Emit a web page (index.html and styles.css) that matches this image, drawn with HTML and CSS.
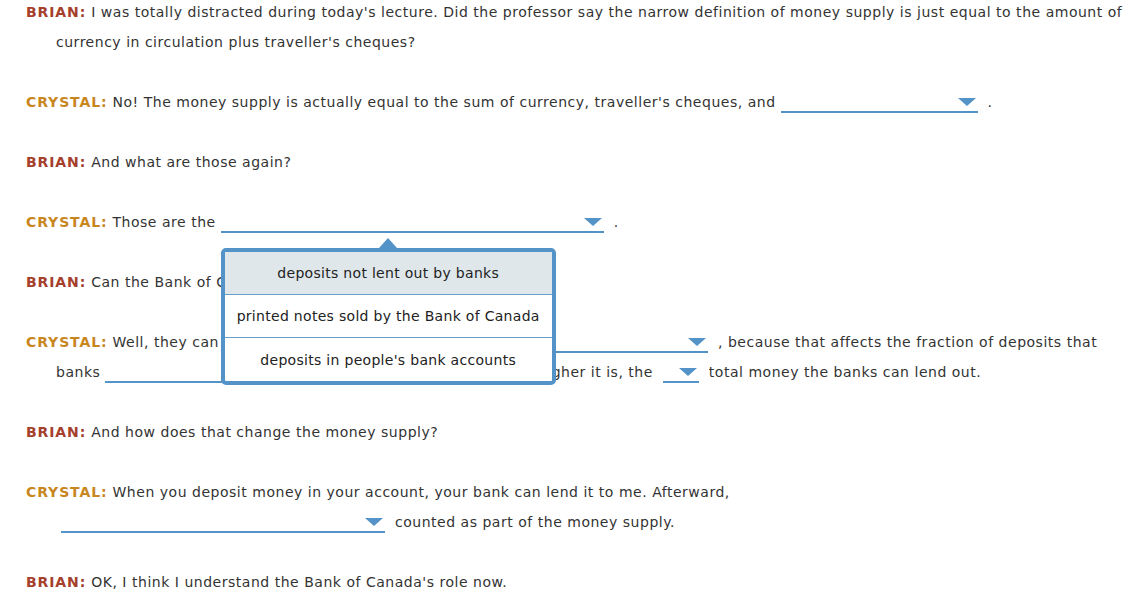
FILE: index.html
```html
<!DOCTYPE html>
<html>
<head>
<meta charset="utf-8">
<link rel="stylesheet" href="styles.css">
</head>
<body>
<div class="dialog">
  <p class="turn"><span class="who brian">BRIAN:</span> I was totally distracted during today's lecture. Did the professor say the narrow definition of money supply is just equal to the amount of currency in circulation plus traveller's cheques?</p>
  <p class="turn"><span class="who crystal">CRYSTAL:</span> No! The money supply is actually equal to the sum of currency, traveller's cheques, and<span class="dd w197"></span> .</p>
  <p class="turn"><span class="who brian">BRIAN:</span> And what are those again?</p>
  <p class="turn"><span class="who crystal">CRYSTAL:</span> Those are the<span class="dd w383 open"><span class="menu"><span class="opt active">deposits not lent out by banks</span><span class="opt">printed notes sold by the Bank of Canada</span><span class="opt">deposits in people's bank accounts</span></span></span> .</p>
  <p class="turn"><span class="who brian">BRIAN:</span> Can the Bank of Canada change the money supply?</p>
  <p class="turn"><span class="who crystal">CRYSTAL:</span> Well, they can<span class="dd w484"></span> , because that affects the fraction of deposits that banks<span class="dd w380"></span> . The higher it is, the <span class="dd w36"></span> total money the banks can lend out.</p>
  <p class="turn"><span class="who brian">BRIAN:</span> And how does that change the money supply?</p>
  <p class="turn"><span class="who crystal">CRYSTAL:</span> When you deposit money in your account, your bank can lend it to me. Afterward,<br><span class="dd w324"></span> counted as part of the money supply.</p>
  <p class="turn"><span class="who brian">BRIAN:</span> OK, I think I understand the Bank of Canada's role now.</p>
</div>
</body>
</html>
```

FILE: styles.css
```css
html, body {
  margin: 0;
  padding: 0;
  background: #ffffff;
}

body {
  font-family: "DejaVu Sans", Verdana, sans-serif;
  font-size: 14px;
  letter-spacing: 0.52px;
  color: #333333;
}

.dialog {
  margin-top: -3px;
  padding-right: 2px;
}

.turn {
  margin: 0 0 30px 0;
  line-height: 30px;
  padding-left: 56px;
  text-indent: -30px;
}

.turn:last-child {
  margin-bottom: 0;
}

.who {
  font-weight: bold;
  letter-spacing: 0.9px;
}

.brian {
  color: #a5402c;
}

.crystal {
  color: #c8861e;
}

.dd {
  display: inline-block;
  position: relative;
  height: 16px;
  border-bottom: 2px solid #5393c8;
  margin: 0 5px;
  vertical-align: -6px;
  text-indent: 0;
}

.dd::after {
  content: "";
  position: absolute;
  right: 2px;
  bottom: 5px;
  width: 0;
  height: 0;
  border-left: 9px solid transparent;
  border-right: 9px solid transparent;
  border-top: 8px solid #5393c8;
}

.w197 { width: 197px; }
.w383 { width: 383px; }
.w484 { width: 484px; }
.w380 { width: 380px; }
.w36 { width: 36px; }
.w324 { width: 324px; }

.menu {
  position: absolute;
  left: 0;
  top: calc(100% + 17px);
  z-index: 5;
  width: 327px;
  border: 4px solid #5393c8;
  border-radius: 5px;
  background: #ffffff;
  display: flex;
  flex-direction: column;
  line-height: normal;
  text-indent: 0;
  letter-spacing: 0.3px;
}

.menu::before {
  content: "";
  position: absolute;
  left: 50%;
  top: -14px;
  margin-left: -9px;
  width: 0;
  height: 0;
  border-left: 9px solid transparent;
  border-right: 9px solid transparent;
  border-bottom: 10px solid #5393c8;
}

.opt {
  display: flex;
  align-items: center;
  justify-content: center;
  height: 42px;
  color: #222222;
  white-space: nowrap;
  border-top: 1px solid #6d9fcb;
}

.opt:first-child {
  border-top: none;
}

.opt:last-child {
  height: 43px;
}

.active {
  background: #dfe7eb;
}
```
